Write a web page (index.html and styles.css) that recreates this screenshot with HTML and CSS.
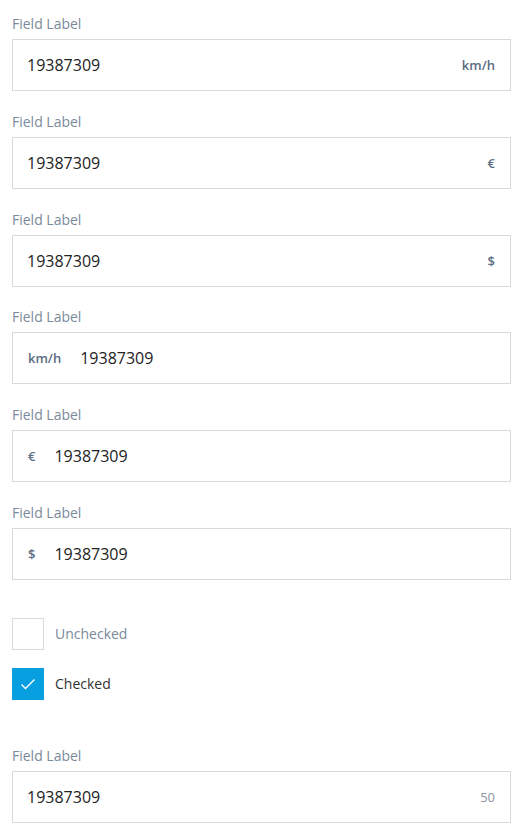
FILE: index.html
```html
<!DOCTYPE html>
<html lang="en">
<head>
    <meta charset="UTF-8">
    <meta name="viewport" content="width=device-width, initial-scale=1.0">
    <title>Form Fields</title>
    <link rel="stylesheet" href="styles.css">
</head>
<body>
    <div class="form">
        <div class="field">
            <label class="field-label">Field Label</label>
            <div class="input-box">
                <span class="value">19387309</span>
                <span class="unit">km/h</span>
            </div>
        </div>

        <div class="field">
            <label class="field-label">Field Label</label>
            <div class="input-box">
                <span class="value">19387309</span>
                <span class="unit">€</span>
            </div>
        </div>

        <div class="field">
            <label class="field-label">Field Label</label>
            <div class="input-box">
                <span class="value">19387309</span>
                <span class="unit">$</span>
            </div>
        </div>

        <div class="field">
            <label class="field-label">Field Label</label>
            <div class="input-box">
                <span class="unit prefix">km/h</span>
                <span class="value">19387309</span>
            </div>
        </div>

        <div class="field">
            <label class="field-label">Field Label</label>
            <div class="input-box">
                <span class="unit prefix">€</span>
                <span class="value">19387309</span>
            </div>
        </div>

        <div class="field">
            <label class="field-label">Field Label</label>
            <div class="input-box">
                <span class="unit prefix">$</span>
                <span class="value">19387309</span>
            </div>
        </div>

        <div class="checks">
            <label class="check">
                <span class="box"></span>
                <span class="check-text">Unchecked</span>
            </label>
            <label class="check is-checked">
                <span class="box">
                    <svg width="16" height="12" viewBox="0 0 16 12">
                        <path d="M1.5 6.5 L5.5 10.5 L14.5 1.5" fill="none" stroke="#fff" stroke-width="1.4"/>
                    </svg>
                </span>
                <span class="check-text">Checked</span>
            </label>
        </div>

        <div class="field">
            <label class="field-label">Field Label</label>
            <div class="input-box">
                <span class="value">19387309</span>
                <span class="counter">50</span>
            </div>
        </div>
    </div>
</body>
</html>
```

FILE: styles.css
```css
:root {
    --border-color: #d9d9d9;
    --label-color: #7b8a9b;
    --unit-color: #5b6d83;
    --text-color: #222;
    --accent-color: #089fe0;
}

body {
    margin: 0;
    font-family: 'Open Sans', sans-serif;
    color: var(--text-color);
    background: #fff;
}

.form {
    padding: 14px 12px 0 12px;
    display: flex;
    flex-direction: column;
}

.field {
    display: flex;
    flex-direction: column;
    gap: 5px;
    margin-bottom: 20.8px;
}

.field-label {
    font-size: 14px;
    line-height: 20px;
    color: var(--label-color);
}

.input-box {
    height: 50px;
    border: 1px solid var(--border-color);
    display: flex;
    align-items: center;
    padding: 0 15px 0 14px;
}

.value {
    font-size: 16px;
    flex: 1;
}

.unit {
    font-size: 13px;
    font-weight: 600;
    color: var(--unit-color);
}

.unit.prefix {
    margin-right: 19px;
    padding-left: 1px;
}

.counter {
    font-size: 13px;
    color: #8b95a1;
}

.checks {
    display: flex;
    flex-direction: column;
    gap: 18px;
    margin-top: 17px;
    margin-bottom: 46px;
}

.check {
    display: flex;
    align-items: center;
    gap: 11px;
    font-size: 14px;
}

.box {
    width: 30px;
    height: 30px;
    border: 1px solid var(--border-color);
    display: flex;
    align-items: center;
    justify-content: center;
}

.is-checked .box {
    background: var(--accent-color);
    border-color: var(--accent-color);
}

.check-text {
    color: var(--label-color);
}

.is-checked .check-text {
    color: #333;
}
```
